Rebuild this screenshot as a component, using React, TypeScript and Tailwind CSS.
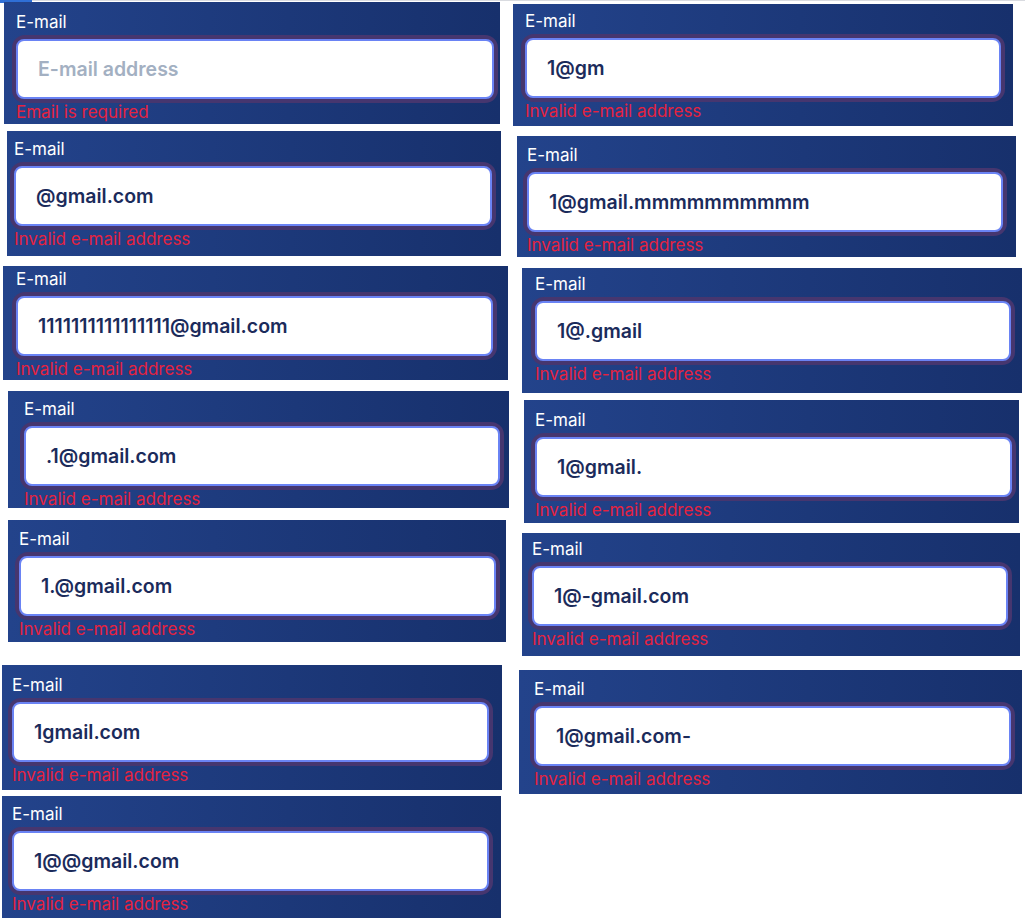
import React from "react";

type Panel = { cls: string; value: string; placeholder?: string; error: string };

const left: Panel[] = [
  { cls: "ml-[4px] mt-[0px] w-[496px] h-[122px] pl-[12px] pr-[6px] pt-[10px]", value: "", placeholder: "E-mail address", error: "Email is required" },
  { cls: "ml-[7px] mt-[7px] w-[494px] h-[125px] pl-[7px] pr-[9px] pt-[8px]", value: "@gmail.com", error: "Invalid e-mail address" },
  { cls: "ml-[3px] mt-[10px] w-[505px] h-[114px] pl-[13px] pr-[15px] pt-[3px]", value: "1111111111111111@gmail.com", error: "Invalid e-mail address" },
  { cls: "ml-[8px] mt-[11px] w-[501px] h-[117px] pl-[16px] pr-[9px] pt-[8px]", value: ".1@gmail.com", error: "Invalid e-mail address" },
  { cls: "ml-[8px] mt-[12px] w-[498px] h-[122px] pl-[11px] pr-[10px] pt-[9px]", value: "1.@gmail.com", error: "Invalid e-mail address" },
  { cls: "ml-[2px] mt-[23px] w-[500px] h-[125px] pl-[10px] pr-[13px] pt-[10px]", value: "1gmail.com", error: "Invalid e-mail address" },
  { cls: "ml-[2px] mt-[6px] w-[499px] h-[122px] pl-[10px] pr-[12px] pt-[8px]", value: "1@@gmail.com", error: "Invalid e-mail address" },
];

const right: Panel[] = [
  { cls: "ml-[1px] mt-[2px] w-[500px] h-[122px] pl-[12px] pr-[12px] pt-[7px]", value: "1@gm", error: "Invalid e-mail address" },
  { cls: "ml-[5px] mt-[10px] w-[499px] h-[121px] pl-[10px] pr-[13px] pt-[9px]", value: "1@gmail.mmmmmmmmmm", error: "Invalid e-mail address" },
  { cls: "ml-[10px] mt-[11px] w-[500px] h-[125px] pl-[13px] pr-[11px] pt-[6px]", value: "1@.gmail", error: "Invalid e-mail address" },
  { cls: "ml-[12px] mt-[7px] w-[495px] h-[123px] pl-[11px] pr-[7px] pt-[10px]", value: "1@gmail.", error: "Invalid e-mail address" },
  { cls: "ml-[10px] mt-[10px] w-[498px] h-[123px] pl-[10px] pr-[12px] pt-[6px]", value: "1@-gmail.com", error: "Invalid e-mail address" },
  { cls: "ml-[7px] mt-[14px] w-[503px] h-[124px] pl-[15px] pr-[11px] pt-[9px]", value: "1@gmail.com-", error: "Invalid e-mail address" },
];

function Field({ p }: { p: Panel }) {
  return (
    <div className={"flex flex-col bg-linear-to-r from-[#23438b] to-[#17306c] " + p.cls}>
      <div className="text-[17px] leading-[20px] text-white">E-mail</div>
      <div className="mt-[7px] rounded-[9px] shadow-[0_0_0_4px_#46366f]">
        <input
          readOnly
          value={p.value}
          placeholder={p.placeholder}
          className="block h-[60px] w-full rounded-[8px] border-2 border-[#6a83f4] bg-white pl-[20px] text-[19.5px] font-semibold text-[#1b2b5b] placeholder:text-[#a3b0c2] outline-none"
        />
      </div>
      <div className="mt-[3px] text-[17px] leading-[20px] text-[#e6223f]">{p.error}</div>
    </div>
  );
}

export default function App() {
  return (
    <div className="w-[1025px] h-[920px] overflow-hidden bg-white font-['Inter','Liberation_Sans',sans-serif]">
      <div className="flex h-[2px]">
        <div className="w-[32px] h-[3px] bg-[#2f6fd6]" />
        <div className="flex-1 h-[1px] bg-[#d9dbe0]" />
      </div>
      <div className="flex">
        <div className="flex w-[512px] flex-col">
          {left.map((p, i) => (
            <Field key={i} p={p} />
          ))}
        </div>
        <div className="flex flex-col">
          {right.map((p, i) => (
            <Field key={i} p={p} />
          ))}
        </div>
      </div>
    </div>
  );
}
